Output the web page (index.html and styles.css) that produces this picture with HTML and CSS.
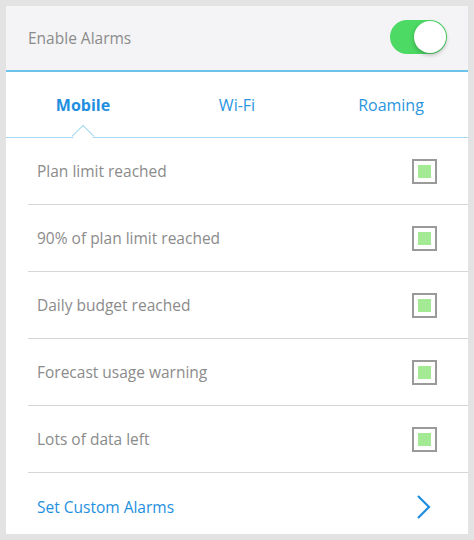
FILE: index.html
```html
<!DOCTYPE html>
<html lang="en">
<head>
  <meta charset="UTF-8"/>
  <meta name="viewport" content="width=device-width,initial-scale=1"/>
  <title>Alarms</title>
  <link rel="stylesheet" href="styles.css">
</head>
<body>

  <div class="card">
    <div class="header">
      <span class="header-label">Enable Alarms</span>
      <div class="toggle on"><span class="knob"></span></div>
    </div>

    <div class="tabs">
      <div class="tab active">Mobile</div>
      <div class="tab">Wi-Fi</div>
      <div class="tab">Roaming</div>
    </div>

    <ul class="alarms">
      <li class="row"><span>Plan limit reached</span><span class="check"></span></li>
      <li class="row"><span>90% of plan limit reached</span><span class="check"></span></li>
      <li class="row"><span>Daily budget reached</span><span class="check"></span></li>
      <li class="row"><span>Forecast usage warning</span><span class="check"></span></li>
      <li class="row"><span>Lots of data left</span><span class="check"></span></li>
      <li class="row custom">
        <span>Set Custom Alarms</span>
        <svg class="chevron" width="16" height="26" viewBox="0 0 16 26">
          <path d="M2 2 L13 13 L2 24" fill="none" stroke="#1e8fe0" stroke-width="2.2"/>
        </svg>
      </li>
    </ul>
  </div>

</body>
</html>
```

FILE: styles.css
```css
* {
  box-sizing: border-box;
}
body {
  margin: 0;
  padding: 6px;
  background: #e3e3e3;
  font-family: 'Open Sans', sans-serif;
  color: #888;
}

.card {
  background: #fff;
  width: 462px;
  height: 528px;
  overflow: hidden;
}

.header {
  display: flex;
  align-items: center;
  justify-content: space-between;
  height: 66px;
  padding: 0 21px 0 22px;
  background: #f4f4f6;
  border-bottom: 2px solid #6cc3ec;
}

.header-label {
  font-size: 15.5px;
  color: #8b8b8b;
}

.toggle {
  position: relative;
  width: 57px;
  height: 34px;
  margin-top: -2px;
  border-radius: 17px;
  background: #4cd964;
}

.toggle .knob {
  position: absolute;
  top: 1px;
  right: 1px;
  width: 32px;
  height: 32px;
  border-radius: 50%;
  background: #fff;
  box-shadow: 0 2px 4px rgba(0, 0, 0, 0.25);
}

.tabs {
  display: flex;
  height: 66px;
  border-bottom: 1px solid #a2d8f1;
}

.tab {
  position: relative;
  flex: 1;
  display: flex;
  align-items: center;
  justify-content: center;
  font-size: 16px;
  color: #2b96e0;
}

.tab.active {
  font-weight: 700;
  color: #1e8fe0;
}

.tab.active::after {
  content: '';
  position: absolute;
  bottom: -7px;
  left: 50%;
  width: 15px;
  height: 15px;
  margin-left: -8px;
  background: #fff;
  border-top: 1px solid #a2d8f1;
  border-left: 1px solid #a2d8f1;
  transform: rotate(45deg);
}

.alarms {
  list-style: none;
  margin: 0;
  padding: 0;
}

.row {
  display: flex;
  align-items: center;
  justify-content: space-between;
  height: 67px;
  margin-left: 22px;
  padding: 0 31px 0 9px;
  border-bottom: 1px solid #d6d6d6;
  font-size: 15.5px;
  color: #8b8b8b;
}

.check {
  width: 25px;
  height: 25px;
  border: 2px solid #9a9a9a;
  padding: 4px;
  background: #a4ea94;
  background-clip: content-box;
}

.row.custom {
  border-bottom: none;
  padding-right: 36px;
  color: #1e8fe0;
}
```
